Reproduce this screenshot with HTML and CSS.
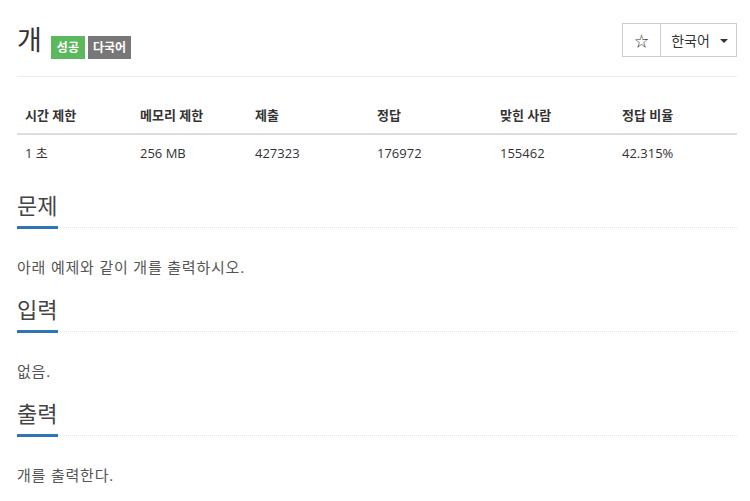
FILE: index.html
```html
<!DOCTYPE html>
<html lang="ko">
<head>
<meta charset="utf-8">
<link rel="stylesheet" href="styles.css">
</head>
<body>
<div class="container">
  <div class="page-header">
    <div class="title-wrap">
      <span class="title">개</span>
      <span class="label label-success">성공</span>
      <span class="label label-default">다국어</span>
    </div>
    <div class="btn-group">
      <button class="btn btn-star">☆</button>
      <button class="btn btn-lang">한국어 <span class="caret"></span></button>
    </div>
  </div>

  <table class="info">
    <thead>
      <tr>
        <th class="c1">시간 제한</th>
        <th class="c2">메모리 제한</th>
        <th class="c3">제출</th>
        <th class="c4">정답</th>
        <th class="c5">맞힌 사람</th>
        <th class="c6">정답 비율</th>
      </tr>
    </thead>
    <tbody>
      <tr>
        <td>1 초</td>
        <td>256 MB</td>
        <td>427323</td>
        <td>176972</td>
        <td>155462</td>
        <td>42.315%</td>
      </tr>
    </tbody>
  </table>

  <section class="problem-section">
    <div class="headline"><h2>문제</h2><span class="rule"></span></div>
    <p>아래 예제와 같이 개를 출력하시오.</p>
  </section>
  <section class="problem-section">
    <div class="headline"><h2>입력</h2><span class="rule"></span></div>
    <p>없음.</p>
  </section>
  <section class="problem-section">
    <div class="headline"><h2>출력</h2><span class="rule"></span></div>
    <p>개를 출력한다.</p>
  </section>
</div>
</body>
</html>
```

FILE: styles.css
```css
* { box-sizing: border-box; }
body {
  margin: 0;
  font-family: "Open Sans", "Noto Sans CJK KR", sans-serif;
  font-size: 14px;
  line-height: 1.42857;
  color: #333;
  background: #fff;
}
.container {
  width: 720px;
  margin-left: 17px;
}
.page-header {
  display: flex;
  justify-content: space-between;
  align-items: flex-start;
  padding-top: 23px;
  padding-bottom: 19px;
  border-bottom: 1px solid #eee;
}
.title-wrap {
  display: flex;
  align-items: baseline;
  gap: 3px;
}
.title {
  font-size: 27px;
  line-height: 34px;
  color: #333;
  margin-right: 6px;
}
.label {
  display: inline-block;
  font-size: 12px;
  font-weight: bold;
  color: #fff;
  line-height: 15px;
  padding: 4px 6px 4px;
  position: relative;
  top: 2px;
}
.label-default { padding: 4px 5px; }
.label-success { background: #5cb85c; }
.label-default { background: #777; }
.btn-group {
  display: flex;
  height: 34px;
  border: 1px solid #ccc;
}
.btn {
  font-family: inherit;
  background: #fff;
  border: none;
  color: #333;
  font-size: 14px;
  padding: 0;
  height: 32px;
}
.btn-star {
  width: 38px;
  border-right: 1px solid #ccc;
  font-size: 14px;
}
.btn-lang {
  width: 75px;
  display: flex;
  align-items: center;
  justify-content: center;
  gap: 10px;
  padding-left: 2px;
}
.caret {
  display: inline-block;
  width: 0;
  height: 0;
  border-top: 4px solid #333;
  border-left: 4px solid transparent;
  border-right: 4px solid transparent;
  margin-top: 2px;
}
.info {
  width: 720px;
  border-collapse: collapse;
  margin-top: 20px;
  font-size: 13px;
}
.info th, .info td {
  text-align: left;
  padding: 8px;
  line-height: 20px;
}
.info th {
  font-weight: bold;
  border-bottom: 2px solid #ddd;
}
.info td {
  border-top: 1px solid #ddd;
}
.c1 { width: 115px; }
.c2 { width: 115px; }
.c3 { width: 122px; }
.c4 { width: 123px; }
.c5 { width: 122px; }
.c6 { width: 123px; }
.problem-section {
  margin-top: 21px;
}
.problem-section + .problem-section {
  margin-top: 19px;
}
.headline {
  display: flex;
  align-items: flex-end;
  margin-bottom: 28px;
}
.headline h2 {
  margin: 0;
  font-size: 22px;
  font-weight: normal;
  line-height: 26px;
  color: #444;
  white-space: nowrap;
  padding-right: 1px;
  padding-bottom: 8px;
  border-bottom: 3px solid #3174b8;
}
.rule {
  flex: 1;
  border-bottom: 1px dotted #e5e5e5;
  margin-bottom: 1px;
}
p {
  margin: 0 0 10px;
  color: #555;
  font-size: 15px;
  letter-spacing: 0.8px;
  line-height: 20px;
}
```
